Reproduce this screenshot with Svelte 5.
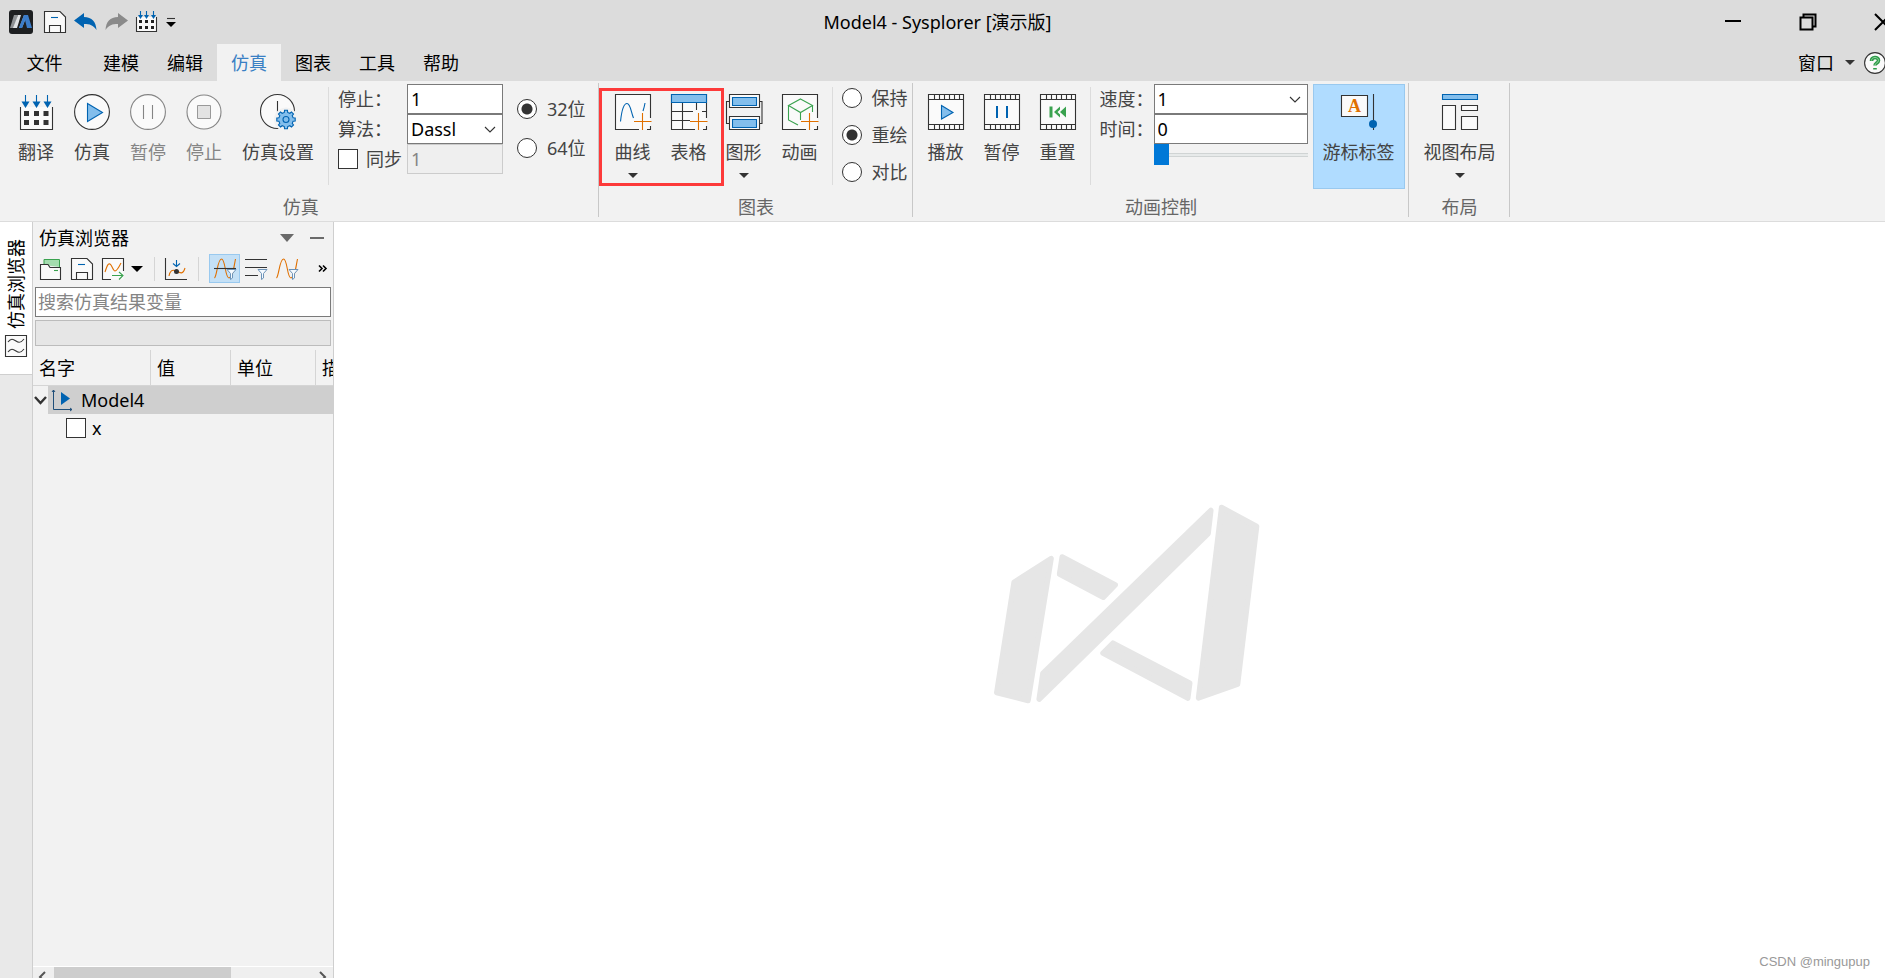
<script>
  let activeTab = $state('仿真');
  let bits = $state('32');
  let plotMode = $state('重绘');
  let speed = $state('1');
  let solver = $state('Dassl');

  const tabs = ['建模', '编辑', '仿真', '图表', '工具', '帮助'];
  const solvers = ['Dassl', 'Radau5', 'Euler'];
  const plotModes = ['保持', '重绘', '对比'];

  function gearPath(cx, cy, outer, inner, teeth) {
    const step = (Math.PI * 2) / teeth;
    const points = [];
    for (let i = 0; i < teeth; i++) {
      const a = i * step;
      for (const [offset, radius] of [[-0.3, inner], [-0.2, outer], [0.2, outer], [0.3, inner]]) {
        const angle = a + offset * step;
        points.push(`${(cx + radius * Math.cos(angle)).toFixed(2)} ${(cy + radius * Math.sin(angle)).toFixed(2)}`);
      }
    }
    return `M${points.join('L')}Z`;
  }
</script>

{#snippet translateIcon()}
  <path d="M2.5 13V35.5H34.5V13" class="ink paper" />
  <path d="M7.5 1V8M18.5 1V8M29.5 1V8" class="blue" />
  <path d="M3.5 7.5h8l-4 6.500zM14.500 7.500h8l-4 6.500zM25.500 7.500h8l-4 6.500z" fill="#0063b1" />
  <path d="M6 17h5v5h-5zM16 17h5v5h-5zM25.500 17h5v5h-5zM6 26h5v5h-5zM16 26h5v5h-5zM25.500 26h5v5h-5z" fill="#333" />
{/snippet}

{#snippet playIcon()}
  <circle cx="18" cy="18" r="17.400" class="ink paper" />
  <path d="M13.500 9.500 28.500 18.500 13.500 27.500z" class="blue sky" />
{/snippet}

{#snippet pauseIcon()}
  <circle cx="18" cy="18" r="17.400" class="grey paper" />
  <path d="M13.500 11V25M22.500 11V25" class="grey" />
{/snippet}

{#snippet stopIcon()}
  <circle cx="18" cy="18" r="17" class="grey paper" />
  <path d="M11.500 11.500h13v13h-13z" fill="#e3e3e3" stroke="#999" />
{/snippet}

{#snippet settingsIcon()}
  <circle cx="17.500" cy="17.500" r="17" class="ink paper" />
  <path d="M17.500 7V17.500H24" class="ink" />
  <circle cx="26" cy="25.500" r="12" fill="#f2f2f2" />
  <path d={gearPath(26, 25.5, 9.3, 7.3, 8)} class="blue sky" />
  <circle cx="26" cy="25.500" r="3" class="blue" />
{/snippet}

{#snippet addFrame()}
  <path d="M.500.500h35v35h-35z" class="paper" />
  <path d="M35.500 24V.500H.500V35.500H24M32 35.500h3.500V32" class="ink" />
{/snippet}

{#snippet plus()}
  <path d="M27.500 19V36M19 27.500H36.500" class="orange" />
{/snippet}

{#snippet curveIcon()}
  {@render addFrame()}
  <path d="M5.500 27.500C6.500 18 8.500 9.500 12 9.500S16 18 18.500 24M30 9C29.500 12 29 14 28 17" class="blue" />
  {@render plus()}
{/snippet}

{#snippet tableIcon()}
  {@render addFrame()}
  <path d="M.500.500h35v8h-35z" class="blue sky" />
  <path d="M11.500 9V35M25.500 9V16M0 17.500H22M31 17.500H36M0 26.500H19" class="ink" />
  {@render plus()}
{/snippet}

{#snippet shapeIcon()}
  <path d="M3.500 7.500H.500V29.500H3.500M33.500 7.500H36V29.500H33.500" class="ink" />
  <path d="M3.500.500h30v13h-30zM3.500 22.500h30v13h-30z" class="ink paper" />
  <path d="M6.500 3.500h24v8h-24zM6.500 25.500h24v8h-24z" class="blue sky" />
{/snippet}

{#snippet animationIcon()}
  {@render addFrame()}
  <path d="M18.500 5 30.500 11.500 18.500 18.500 6.500 11.500zM6.500 11.500V26L16 31M18.500 18.500V26M30.500 11.500V18" class="green" />
  {@render plus()}
{/snippet}

{#snippet film()}
  <path d="M.500.500h35v35h-35z" class="ink paper" />
  <path d="M0 5.500H36M0 30.500H36M6.500 0V5M11.500 0V5M16.500 0V5M21.500 0V5M26.500 0V5M31.500 0V5M6.500 31V36M11.500 31V36M16.500 31V36M21.500 31V36M26.500 31V36M31.500 31V36" class="ink" />
{/snippet}

{#snippet filmPlayIcon()}
  {@render film()}
  <path d="M13.500 11.500 25 18.500 13.500 25z" class="blue sky" />
{/snippet}

{#snippet filmPauseIcon()}
  {@render film()}
  <path d="M12 12h2v12h-2zM22 12h2v12h-2z" fill="#0063b1" />
{/snippet}

{#snippet filmResetIcon()}
  {@render film()}
  <path d="M9.500 12.500h3v11h-3zM20 12.500v3l-2.500 2.500 2.500 2.500v3L14 18zM26 12.500v11L20 18z" fill="#3aa24f" />
{/snippet}

{#snippet cursorIcon()}
  <path d="M.500 1.500h26v21h-26z" class="ink paper" />
  <text x="13.500" y="18" text-anchor="middle" class="letter">A</text>
  <path d="M32.500 0V36" class="ink" />
  <circle cx="32" cy="30" r="4" fill="#0063b1" />
{/snippet}

{#snippet layoutIcon()}
  <path d="M.500.500h35v5h-35z" class="blue sky" />
  <path d="M.500 11.500h13v24h-13zM19.500 11.500h16v5h-16zM19.500 22.500h16v13h-16z" class="ink paper" />
{/snippet}

{#snippet saveIcon()}
  <path d="M.500.500H16L21.500 6V21.500H.500z" class="ink paper" />
  <path d="M5.500 21V14.500H16.500V21" class="ink" />
  <path d="M7 6.500H14" class="blue" />
{/snippet}

{#snippet funnel()}
  <path d="M13 11.500H22L18.500 15.500V20L16.500 21.500V15.500z" fill="#f5faff" stroke="#6d93b8" />
{/snippet}

{#snippet wave()}
  <path d="M.500 20C3 18 3.500 1 7.500 1S11 20 15 20 20 8 21.500 1" class="orange" />
{/snippet}

{#snippet tool(label, icon, opts = {})}
  <button class="tool" class:wide={opts.wide} class:on={opts.on} disabled={opts.disabled}>
    <svg viewBox="0 0 36 36" width="36" height="36" aria-hidden="true">{@render icon()}</svg>
    <span>{label}</span>
    {#if opts.menu}<i class="caret"></i>{/if}
  </button>
{/snippet}

{#snippet chevron()}
  <svg class="chevron" viewBox="0 0 12 7" width="12" height="7" aria-hidden="true"><path d="M1 1 6 6 11 1" class="ink" /></svg>
{/snippet}

<div class="app">
  <header class="titlebar">
    <div class="quick">
      <svg class="logo" viewBox="0 0 24 24" width="24" height="24" aria-hidden="true">
        <rect width="24" height="24" rx="3" fill="#1d1f21" />
        <path d="M5 5H9L5 18H1z" fill="#8d9093" /><path d="M9 5H12L8 18H4z" fill="#e0e2e4" />
        <path d="M15 5 10 18H13L17 8z" fill="#7fb0e6" /><path d="M15 5H19L23 18H18L16 10 13 18H10z" fill="#3b7cc9" />
      </svg>
      <button aria-label="保存"><svg viewBox="0 0 22 22" width="22" height="22">{@render saveIcon()}</svg></button>
      <button aria-label="撤销"><svg viewBox="0 0 23 18" width="23" height="18"><path d="M0 7.500 10 0V4C18 4 22 9 22.500 17C19 12 16 11 10 11V15z" fill="#0063b1" /></svg></button>
      <button aria-label="重做"><svg viewBox="0 0 23 18" width="23" height="18"><path d="M23 7.500 13 0V4C5 4 1 9 .500 17C4 12 7 11 13 11V15z" fill="#8a8a8a" /></svg></button>
      <button aria-label="翻译">
        <svg viewBox="0 0 22 22" width="22" height="22">
          <path d="M.500 6V20.500H20.500V6" class="ink paper" />
          <path d="M4.500 0V5M10.500 0V5M17.500 0V5" class="blue" />
          <path d="M2 4h5l-2.500 4zM8 4h5l-2.500 4zM15 4h5l-2.500 4z" fill="#0063b1" />
          <path d="M3 9h3v3h-3zM9 9h3v3h-3zM15 9h3v3h-3zM3 15h3v3h-3zM9 15h3v3h-3zM15 15h3v3h-3z" fill="#222" />
        </svg>
      </button>
      <button aria-label="自定义"><svg viewBox="0 0 10 10" width="10" height="10"><path d="M1 1.500H9" class="ink" /><path d="M0 5H10L5 10z" fill="#000" /></svg></button>
    </div>
    <h1>Model4 - Sysplorer [演示版]</h1>
    <div class="window-controls">
      <button aria-label="最小化"><svg viewBox="0 0 18 18" width="18" height="18"><path d="M1 8H17" class="win" /></svg></button>
      <button aria-label="还原"><svg viewBox="0 0 18 18" width="18" height="18"><path d="M1.500 4.500h12v12h-12zM4.500 4V1.500H16.500V13.500H14" class="win" /></svg></button>
      <button aria-label="关闭"><svg viewBox="0 0 18 18" width="18" height="18"><path d="M1 1 17 17M17 1 1 17" class="win" /></svg></button>
    </div>
  </header>

  <nav class="tabs">
    <button class="file">文件</button>
    {#each tabs as tab}
      <button class:current={tab === activeTab} onclick={() => (activeTab = tab)}>{tab}</button>
    {/each}
    <div class="tabs-end">
      <button class="window-menu">窗口<i class="caret"></i></button>
      <button class="help" aria-label="帮助文档">
        <svg viewBox="0 0 22 22" width="22" height="22">
          <circle cx="11" cy="11" r="10.400" class="ink paper" />
          <path d="M7.500 9C7.500 4.500 14.500 4.500 14.500 8.500 14.500 11 11 11 11 13.500M11 16V17.500" fill="none" stroke="#2e9b49" stroke-width="3.600" />
          <path d="M7.500 8.500C7.500 4.500 14.500 4.500 14.500 8.500 14.500 11 11 11 11 13" fill="none" stroke="#8ed39d" />
        </svg>
      </button>
    </div>
  </nav>

  <section class="ribbon">
    <div class="group">
      <div class="items">
        {@render tool('翻译', translateIcon)}
        {@render tool('仿真', playIcon)}
        {@render tool('暂停', pauseIcon, { disabled: true })}
        {@render tool('停止', stopIcon, { disabled: true })}
        {@render tool('仿真设置', settingsIcon, { wide: true })}
        <div class="rule"></div>
        <div class="fields sim-fields">
          <label for="stop">停止：</label>
          <input id="stop" class="box" value="1" />
          <label for="solver">算法：</label>
          <div class="select">
            <select id="solver" class="box" bind:value={solver}>
              {#each solvers as name}<option>{name}</option>{/each}
            </select>
            {@render chevron()}
          </div>
          <label class="sync"><input type="checkbox" />同步</label>
          <input class="box" value="1" disabled aria-label="同步步长" />
        </div>
        <div class="radios bits">
          <label><input type="radio" name="bits" value="32" bind:group={bits} />32位</label>
          <label><input type="radio" name="bits" value="64" bind:group={bits} />64位</label>
        </div>
      </div>
      <h2>仿真</h2>
    </div>

    <div class="group charts">
      <div class="items">
        <div class="highlighted">
          {@render tool('曲线', curveIcon, { menu: true })}
          {@render tool('表格', tableIcon)}
        </div>
        {@render tool('图形', shapeIcon, { menu: true })}
        {@render tool('动画', animationIcon)}
        <div class="rule"></div>
        <div class="radios modes">
          {#each plotModes as mode}
            <label><input type="radio" name="mode" value={mode} bind:group={plotMode} />{mode}</label>
          {/each}
        </div>
      </div>
      <h2>图表</h2>
    </div>

    <div class="group">
      <div class="items">
        {@render tool('播放', filmPlayIcon)}
        {@render tool('暂停', filmPauseIcon)}
        {@render tool('重置', filmResetIcon)}
        <div class="rule"></div>
        <div class="fields play-fields">
          <label for="speed">速度：</label>
          <div class="select">
            <select id="speed" class="box" bind:value={speed}>
              <option>1</option><option>2</option><option>4</option>
            </select>
            {@render chevron()}
          </div>
          <label for="time">时间：</label>
          <input id="time" class="box time" value="0" />
          <input class="slider" type="range" min="0" max="100" value="0" aria-label="时间进度" />
        </div>
        {@render tool('游标标签', cursorIcon, { wide: true, on: true })}
      </div>
      <h2>动画控制</h2>
    </div>

    <div class="group">
      <div class="items">
        {@render tool('视图布局', layoutIcon, { wide: true, menu: true })}
      </div>
      <h2>布局</h2>
    </div>
  </section>

  <div class="body">
    <div class="dock">
      <button class="dock-tab">
        <span>仿真浏览器</span>
        <svg viewBox="0 0 22 22" width="22" height="22" aria-hidden="true">
          <path d="M.500.500h21v21h-21z" class="ink paper" />
          <path d="M3 7C6 3 8 4 11 6S16 8 19 4M3 17C6 13 8 14 11 16S16 18 19 14" class="ink" />
        </svg>
      </button>
    </div>

    <aside class="browser">
      <div class="panel-title">
        <h3>仿真浏览器</h3>
        <button aria-label="面板菜单"><svg viewBox="0 0 14 8" width="14" height="8"><path d="M0 0H14L7 8z" fill="#6a6a6a" /></svg></button>
        <button aria-label="隐藏面板"><svg viewBox="0 0 14 2" width="14" height="2"><path d="M0 0H14V2H0z" fill="#6a6a6a" /></svg></button>
      </div>

      <div class="toolbar">
        <button aria-label="打开结果">
          <svg viewBox="0 0 22 22" width="22" height="22"><path d="M4 7V1.500H19.500V9" fill="#a3dcae" stroke="#3aa24f" /><path d="M.500 21.500V6.500H8L10 9.500H20.500V21.500z" class="ink paper" /><path d="M14 12.500H18" class="green" /></svg>
        </button>
        <button aria-label="保存结果"><svg viewBox="0 0 22 22" width="22" height="22">{@render saveIcon()}</svg></button>
        <button class="export" aria-label="导出曲线">
          <svg viewBox="0 0 22 22" width="22" height="22"><path d="M.500.500h21v21h-21z" class="paper" /><path d="M21.500 13V.500H.500V21.500H9" class="ink" /><path d="M3 14C5 8 6 5 8 6S11 13 13 13 17 9 19 5" class="orange" /><path d="M10 17.500H21M17 14 21 17.500 17 21.500" class="green" /></svg>
          <i class="caret dark"></i>
        </button>
        <div class="divider"></div>
        <button aria-label="初值">
          <svg viewBox="0 0 22 22" width="22" height="22"><path d="M.500 0V21.500H22" class="ink" /><path d="M4 18C5 13 7 11 11 13S18 17 20 10" class="orange" /><circle cx="11.500" cy="13.500" r="2.500" fill="#333" /><path d="M11.500 2V8M8 5.500 11.500 8.500 15 5.500" class="blue" /></svg>
        </button>
        <div class="divider"></div>
        <div class="filters">
          <button class="filter on" aria-label="筛选已绘曲线">
            <svg viewBox="0 0 22 22" width="22" height="22">{@render wave()}<path d="M0 10.500H22" class="ink" />{@render funnel()}</svg>
          </button>
          <button class="filter" aria-label="筛选列表">
            <svg viewBox="0 0 22 22" width="22" height="22"><path d="M0 1.500H22M0 9.500H22M0 17.500H13" class="ink" />{@render funnel()}</svg>
          </button>
          <button class="filter" aria-label="筛选曲线">
            <svg viewBox="0 0 22 22" width="22" height="22">{@render wave()}{@render funnel()}</svg>
          </button>
        </div>
        <button class="more" aria-label="更多">
          <svg viewBox="0 0 9 7" width="9" height="7"><path d="M1 .500 4 3.500 1 6.500M5 .500 8 3.500 5 6.500" fill="none" stroke="#000" stroke-width="1.600" /></svg>
        </button>
      </div>

      <input class="search" type="text" placeholder="搜索仿真结果变量" aria-label="搜索仿真结果变量" />
      <div class="progress"></div>

      <div class="tree">
        <table>
          <colgroup><col class="c-name" /><col class="c-value" /><col class="c-unit" /><col /></colgroup>
          <thead><tr><th>名字</th><th>值</th><th>单位</th><th>描述</th></tr></thead>
          <tbody>
            <tr>
              <td colspan="4">
                <div class="node root">
                  <button aria-label="折叠"><svg viewBox="0 0 13 9" width="13" height="9"><path d="M1 1 6.500 7 12 1" fill="none" stroke="#333" stroke-width="2.400" /></svg></button>
                  <div class="node-label">
                    <svg viewBox="0 0 22 22" width="22" height="22" aria-hidden="true"><path d="M2.500 1V20.500H21M1 3 2.500 1 4 3M19 19 21 20.500 19 22" fill="none" stroke="#1f4e79" /><path d="M10 3V16L19 9.500z" fill="#0063b1" /></svg>
                    Model4
                  </div>
                </div>
              </td>
            </tr>
            <tr>
              <td colspan="4"><label class="node leaf"><input type="checkbox" />x</label></td>
            </tr>
          </tbody>
        </table>
      </div>

      <div class="scrollbar">
        <svg viewBox="0 0 7 12" width="7" height="12" aria-hidden="true"><path d="M6 1 1 6 6 11" fill="none" stroke="#555" stroke-width="2" /></svg>
        <div class="track"><div class="thumb"></div></div>
        <svg viewBox="0 0 7 12" width="7" height="12" aria-hidden="true"><path d="M1 1 6 6 1 11" fill="none" stroke="#555" stroke-width="2" /></svg>
      </div>
    </aside>

    <main>
      <svg viewBox="42 43 796 598" width="266" height="200" aria-hidden="true">
        <g fill="#e6e6e6" stroke="#e6e6e6" stroke-width="16" stroke-linejoin="round">
          <path d="M102 277 213 206 144 631 50 607z" />
          <path d="M246 201 405 285 369 322 238 253z" />
          <path d="M691 62 683 131 177 627 188 550z" />
          <path d="M398 459 628 579 622 624 368 489z" />
          <path d="M723 53 828 110 771 582 654 623z" />
        </g>
      </svg>
      <p>CSDN @mingupup</p>
    </main>
  </div>
</div>

<style>
  :global(body) {
    overflow: hidden;
  }
  .app {
    display: flex;
    flex-direction: column;
    height: 100vh;
    overflow: hidden;
    background: #fff;
    color: #000;
    font: 18px/24px 'Noto Sans', 'Noto Sans CJK SC', sans-serif;
  }
  .app :is(button, input, select) {
    font: inherit;
    color: inherit;
    box-sizing: border-box;
    border-radius: 0;
    margin: 0;
  }
  button {
    padding: 0;
    border: 0;
    background: none;
  }
  h1, h2, h3, p {
    margin: 0;
    font-size: inherit;
    font-weight: 400;
  }
  svg {
    display: block;
    flex: none;
    overflow: visible;
  }
  .ink { stroke: #333; }
  .grey { stroke: #858585; }
  .blue { stroke: #0063b1; }
  .green { stroke: #3aa24f; }
  .orange { stroke: #e07000; }
  .win { stroke: #000; stroke-width: 2; fill: none; }
  .ink, .grey, .blue, .green, .orange { fill: none; stroke-width: 1.1; }
  .paper { fill: #fafafa; }
  .sky { fill: #83beec; }
  .letter {
    font: bold 18px 'Liberation Serif', serif;
    fill: #e07000;
  }
  .caret {
    border: 5px solid transparent;
    border-top-color: #333;
    border-bottom: 0;
  }
  .caret.dark {
    border-width: 6px 6px 0;
    border-top-color: #000;
  }

  .titlebar {
    display: grid;
    grid-template-columns: 1fr auto 1fr;
    align-items: center;
    height: 44px;
    padding-right: 10px;
    background: #dcdcdc;
  }
  .quick {
    display: flex;
    align-items: center;
    gap: 8px;
    padding-left: 9px;
  }
  .logo {
    margin-right: 3px;
  }
  .window-controls {
    display: flex;
    justify-content: flex-end;
    margin-right: -45px;
  }
  .window-controls button {
    display: grid;
    place-items: center;
    width: 75px;
    height: 44px;
  }

  .tabs {
    display: flex;
    flex: none;
    height: 37px;
    background: #dcdcdc;
  }
  .tabs > button {
    width: 64px;
  }
  .tabs > .file {
    width: 89px;
  }
  .tabs > .current {
    background: #f2f2f2;
    color: #3a80c4;
  }
  .tabs-end {
    display: flex;
    align-items: center;
    gap: 9px;
    margin: 0 -1px 0 auto;
  }
  .window-menu {
    display: flex;
    align-items: center;
    gap: 11px;
  }

  .ribbon {
    display: flex;
    flex: none;
    height: 140px;
    border-bottom: 1px solid #dcdcdc;
    background: #f2f2f2;
    color: #444;
  }
  .group {
    display: flex;
    flex-direction: column;
    justify-content: space-between;
    margin: 2px 0 4px;
    padding: 1px 3px 0 5px;
    border-right: 1px solid #c8c8c8;
  }
  .group:first-child {
    padding: 1px 12px 0 8px;
  }
  .group:first-child h2 {
    padding-left: 8px;
  }
  .charts {
    padding-right: 4px;
    padding-left: 6px;
  }
  .group h2 {
    line-height: 20px;
    text-align: center;
    color: #666;
  }
  .items {
    display: flex;
  }
  .tool {
    display: flex;
    flex-direction: column;
    align-items: center;
    width: 56px;
    height: 105px;
    padding-top: 9px;
    border: 1px solid transparent;
  }
  .tool svg {
    margin-bottom: 10px;
  }
  .tool .caret {
    margin-top: 9px;
  }
  .tool.wide {
    width: 92px;
  }
  .tool:disabled {
    color: #858585;
  }
  .tool.on {
    margin-left: 5px;
    background: #b0dcff;
    border-color: #99c9ef;
  }
  .highlighted {
    display: flex;
    width: 125px;
    height: 98px;
    margin: 4px -8px 0 -6px;
    box-sizing: border-box;
    border: 3px solid #fd3a3a;
    padding-left: 3px;
  }
  .highlighted .tool {
    flex: none;
    height: 90px;
    padding-top: 2px;
  }
  .rule {
    width: 1px;
    height: 98px;
    margin: 3px 0 0 4px;
    background: #dcdcdc;
  }
  .fields {
    display: grid;
    grid-auto-rows: 30px;
    align-items: center;
  }
  .sim-fields {
    grid-template-columns: 69px 96px;
    margin-left: 9px;
  }
  .play-fields {
    grid-template-columns: 54px 154px;
    margin-left: 9px;
  }
  .box {
    width: 100%;
    height: 30px;
    padding: 0 3px;
    border: 1px solid #7a7a7a;
    background: #fff;
    outline: 0;
  }
  .app .box {
    color: #000;
  }
  .app .box:disabled {
    border-color: #ccc;
    background: #efefef;
    color: #858585;
  }
  .select {
    display: grid;
    align-items: center;
  }
  .select > :global(*) {
    grid-area: 1 / 1;
  }
  select {
    appearance: none;
  }
  .chevron {
    justify-self: end;
    margin-right: 7px;
    pointer-events: none;
  }
  .sync {
    display: flex;
    align-items: center;
    gap: 8px;
    white-space: nowrap;
  }
  input[type='checkbox'],
  input[type='radio'] {
    appearance: none;
    flex: none;
    width: 20px;
    height: 20px;
    border: 1px solid #333;
    background: #fff;
  }
  .app input[type='radio'] {
    border-radius: 50%;
  }
  input[type='radio']:checked {
    background: radial-gradient(circle, #333 5px, #fff 6px);
  }
  .slider {
    appearance: none;
    grid-column: 2;
    align-self: start;
    width: 100%;
    height: 21px;
    background:
      linear-gradient(#e7eaea, #e7eaea) center / 100% 2px no-repeat,
      linear-gradient(#d0d4d4, #d0d4d4) center / 100% 4px no-repeat;
  }
  .slider::-webkit-slider-thumb {
    appearance: none;
    width: 15px;
    height: 21px;
    background: #0078d7;
  }
  .radios {
    display: flex;
    flex-direction: column;
  }
  .radios label {
    display: flex;
    align-items: center;
    gap: 10px;
  }
  .bits {
    gap: 15px;
    padding-top: 13px;
    margin-left: 14px;
  }
  .modes {
    gap: 13px;
    padding-top: 2px;
    margin-left: 9px;
  }

  .body {
    display: flex;
    flex: 1;
    min-height: 0;
  }
  .dock {
    flex: none;
    width: 32px;
    border-right: 1px solid #cfcfcf;
    background: #e9e9e9;
  }
  .dock-tab {
    display: flex;
    flex-direction: column;
    align-items: center;
    justify-content: flex-end;
    gap: 6px;
    width: 32px;
    height: 153px;
    padding: 0 1px 17px 0;
    border-bottom: 1px solid #cfcfcf;
    background: #fff;
  }
  .dock-tab span {
    writing-mode: vertical-rl;
    text-orientation: sideways;
    transform: rotate(180deg);
  }
  .browser {
    display: flex;
    flex: none;
    flex-direction: column;
    width: 300px;
    border-right: 1px solid #cfcfcf;
    background: #f2f2f2;
  }
  .panel-title {
    display: flex;
    align-items: center;
    gap: 16px;
    height: 32px;
    padding: 0 9px 0 6px;
  }
  .panel-title h3 {
    flex: 1;
  }
  .toolbar {
    display: flex;
    align-items: center;
    gap: 9px;
    height: 29px;
    padding: 0 6px 0 7px;
  }
  .export {
    display: flex;
    align-items: center;
    gap: 7px;
  }
  .divider {
    width: 1px;
    height: 24px;
    margin: 0 1px 0 2px;
    background: #d5d5d5;
  }
  .filters {
    display: flex;
  }
  .filter {
    display: grid;
    place-items: center;
    width: 31px;
    height: 29px;
    border: 1px solid transparent;
  }
  .filter.on {
    border-color: #99c9ef;
    background: #c4e0f6;
  }
  .app .more {
    margin-left: auto;
  }
  .search {
    height: 30px;
    padding: 0 2px;
    border: 1px solid #7a7a7a;
    background: #fff;
    outline: 0;
  }
  .app .search {
    margin: 4px 2px 3px;
  }
  .search::placeholder {
    color: #858585;
  }
  .progress {
    height: 24px;
    margin: 0 2px 4px;
    border: 1px solid #bcbcbc;
    background: #e6e6e6;
  }
  .tree {
    flex: 1;
    min-height: 0;
    overflow: hidden;
    border-bottom: 1px solid #fff;
  }
  table {
    width: 100%;
    table-layout: fixed;
    border-collapse: separate;
    border-spacing: 0;
  }
  .c-name { width: 118px; }
  .c-value { width: 80px; }
  .c-unit { width: 85px; }
  th {
    height: 35px;
    padding: 0 0 0 6px;
    overflow: hidden;
    border-right: 1px solid #d5d5d5;
    border-bottom: 1px solid #d5d5d5;
    font-weight: 400;
    text-align: left;
    white-space: nowrap;
    text-overflow: clip;
  }
  th:last-child {
    border-right: 0;
  }
  td {
    padding: 0;
  }
  .node {
    display: flex;
    align-items: center;
    height: 28px;
  }
  .root > button {
    display: grid;
    place-items: center;
    width: 15px;
  }
  .node-label {
    display: flex;
    flex: 1;
    align-items: center;
    gap: 8px;
    height: 28px;
    padding-left: 3px;
    background: #cfcfcf;
  }
  .leaf {
    gap: 6px;
    padding-left: 33px;
  }
  .scrollbar {
    display: flex;
    flex: none;
    justify-content: space-between;
    height: 11px;
    padding: 0 7px 0 6px;
    overflow: hidden;
    background: #efefef;
  }
  .scrollbar > svg {
    margin-top: 4px;
  }
  .track {
    flex: 1;
    margin: 0 8px;
  }
  .thumb {
    width: 69%;
    height: 11px;
    background: #cdcdcd;
  }
  main {
    display: grid;
    flex: 1;
    min-width: 0;
    place-items: center;
    background: #fff;
  }
  main > * {
    grid-area: 1 / 1;
  }
  main > svg {
    margin: 8px 0 0 34px;
  }
  main > p {
    place-self: end;
    padding: 0 15px 7px 0;
    color: #999;
    font: 13px/18px 'Liberation Sans', Arial, sans-serif;
  }
</style>
